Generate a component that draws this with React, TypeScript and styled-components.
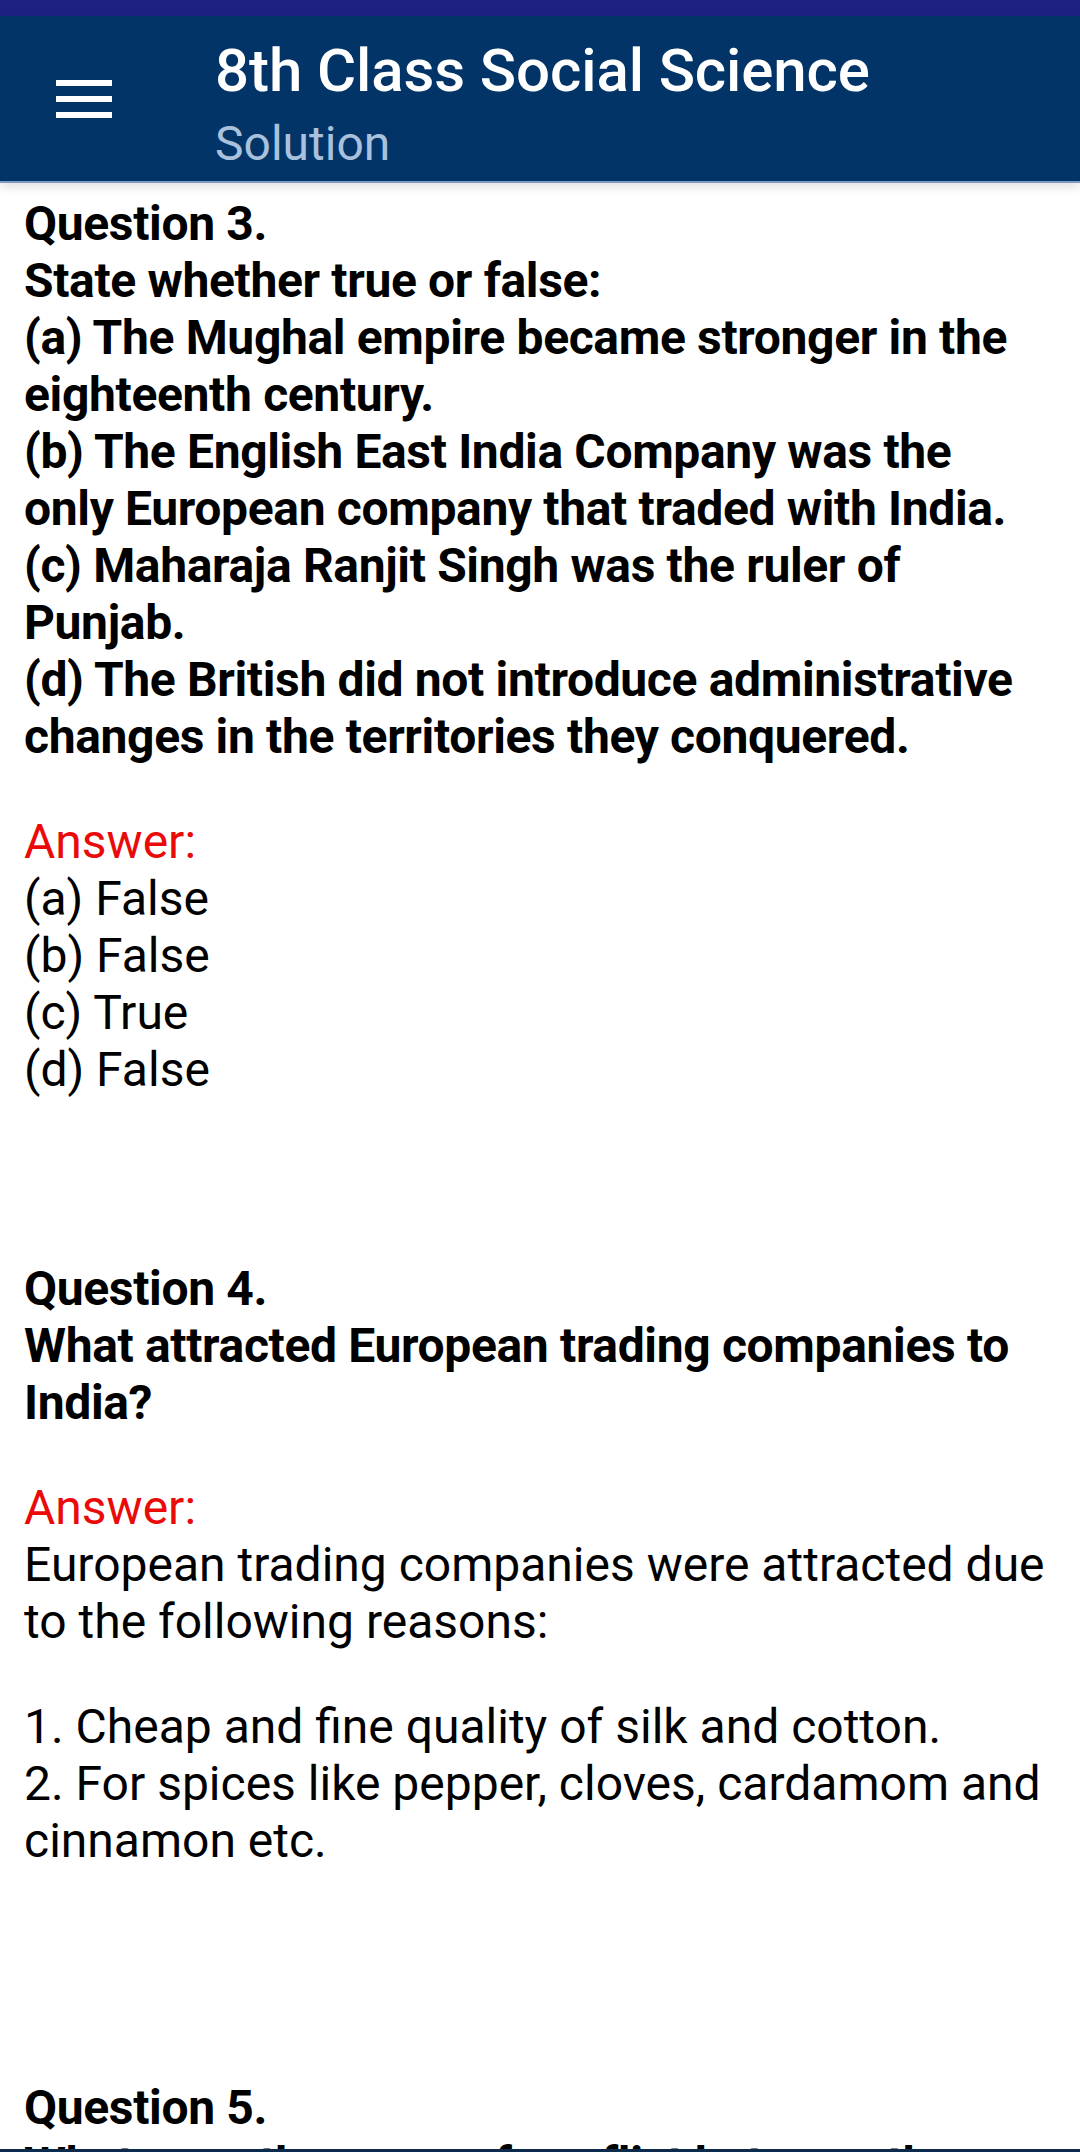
import React from 'react';
import styled, { createGlobalStyle } from 'styled-components';

const GlobalStyle = createGlobalStyle`
  html, body {
    margin: 0;
    padding: 0;
    background: #fff;
  }
  body {
    font-family: Roboto, "Liberation Sans", Arial, sans-serif;
    overflow: hidden;
  }
`;

const StatusBar = styled.div`
  height: 16px;
  background: #1f2182;
`;

const AppBar = styled.header`
  height: 167px;
  background: #023467;
  display: flex;
  align-items: flex-start;
  border-bottom: 2px solid #7f9cc0;
  box-sizing: border-box;
  box-shadow: 0 4px 10px rgba(0, 0, 0, 0.12);
  position: relative;
  z-index: 2;
`;

const MenuButton = styled.button`
  align-self: center;
  margin: 0 0 0 56px;
  padding: 0;
  border: 0;
  background: none;
  width: 56px;
  display: flex;
  flex-direction: column;
  gap: 10px;
`;

const MenuBar = styled.span`
  display: block;
  height: 6px;
  background: #fff;
`;

const TitleBlock = styled.div`
  display: flex;
  flex-direction: column;
  gap: 10px;
  padding-top: 20px;
  margin-left: 103px;
`;

const Title = styled.h1`
  margin: 0;
  font-size: 60px;
  line-height: 70px;
  font-weight: 500;
  color: #fff;
  letter-spacing: -0.1px;
`;

const Subtitle = styled.div`
  font-size: 48px;
  line-height: 56px;
  color: #a9c1dd;
`;

const Content = styled.main`
  padding: 12px 30px 0 24px;
  font-size: 48px;
  line-height: 57px;
  color: #000;
`;

const Para = styled.p<{ $bold?: boolean; $first?: boolean }>`
  margin: ${(p) => (p.$first ? '0' : '48px')} 0 0;
  font-weight: ${(p) => (p.$bold ? 700 : 400)};
  letter-spacing: ${(p) => (p.$bold ? '-0.35px' : 'normal')};
`;

const AnswerLabel = styled.span`
  color: #ea0a0a;
`;

const Gap = styled.div<{ $lines: number; $extra?: number }>`
  height: ${(p) => p.$lines * 57 + (p.$extra ?? 0)}px;
`;

const BottomEdge = styled.div`
  position: fixed;
  left: 0;
  right: 0;
  bottom: 0;
  height: 3px;
  background: #0c2a4c;
`;

export default function App() {
  return (
    <>
      <GlobalStyle />
      <StatusBar />
      <AppBar>
        <MenuButton aria-label="menu">
          <MenuBar />
          <MenuBar />
          <MenuBar />
        </MenuButton>
        <TitleBlock>
          <Title>8th Class Social Science</Title>
          <Subtitle>Solution</Subtitle>
        </TitleBlock>
      </AppBar>
      <Content>
        <Para $bold $first>
          Question 3.
          <br />
          State whether true or false:
          <br />
          (a) The Mughal empire became stronger in the eighteenth century.
          <br />
          (b) The English East India Company was the only European company that traded with India.
          <br />
          (c) Maharaja Ranjit Singh was the ruler of Punjab.
          <br />
          (d) The British did not introduce administrative changes in the territories they conquered.
        </Para>
        <Para>
          <AnswerLabel>Answer:</AnswerLabel>
          <br />
          (a) False
          <br />
          (b) False
          <br />
          (c) True
          <br />
          (d) False
        </Para>
        <Gap $lines={2} />
        <Para $bold>
          Question 4.
          <br />
          What attracted European trading companies to India?
        </Para>
        <Para>
          <AnswerLabel>Answer:</AnswerLabel>
          <br />
          European trading companies were attracted due to the following reasons:
        </Para>
        <Para>
          1. Cheap and fine quality of silk and cotton.
          <br />
          2. For spices like pepper, cloves, cardamom and cinnamon etc.
        </Para>
        <Gap $lines={2} $extra={48} />
        <Para $bold>
          Question 5.
          <br />
          What were the areas of conflict between the Bengal Nawabs and the East India Company?
        </Para>
      </Content>
      <BottomEdge />
    </>
  );
}
